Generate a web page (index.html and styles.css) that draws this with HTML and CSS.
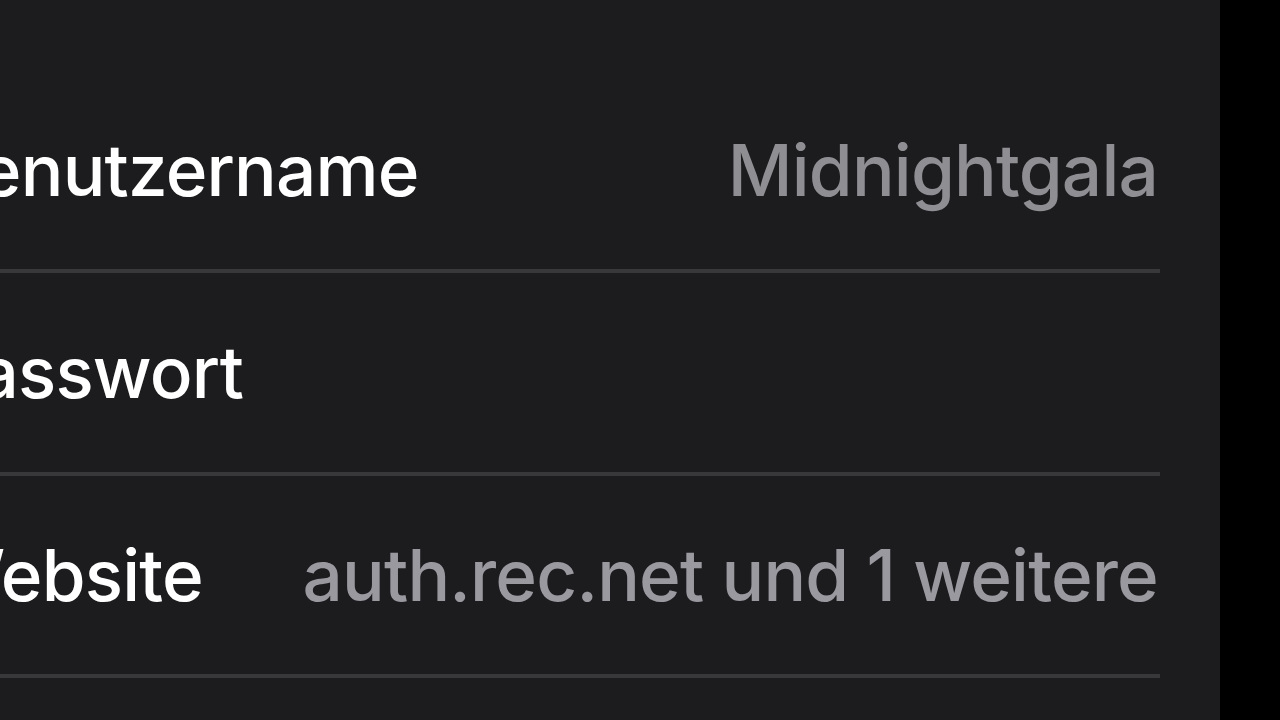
FILE: index.html
```html
<!DOCTYPE html>
<html lang="de">
<head>
<meta charset="utf-8">
<title>Passwort</title>
<link rel="stylesheet" href="styles.css">
</head>
<body>
<div class="screen">
  <div class="panel">
    <ul class="list">
      <li class="row"><span class="label">Benutzername</span><span class="value">Midnightgala</span></li>
      <li class="row"><span class="label">Passwort</span><span class="value"></span></li>
      <li class="row"><span class="label">Website</span><span class="value value-link">auth.rec.net und 1 weitere</span></li>
    </ul>
  </div>
  <div class="edge"></div>
</div>
</body>
</html>
```
FILE: styles.css
```css
html, body {
  margin: 0;
  padding: 0;
  background: #000;
}
.screen {
  display: flex;
  width: 1280px;
  height: 720px;
  overflow: hidden;
}
.panel {
  width: 1220px;
  background: #1c1c1e;
  overflow: hidden;
  padding-top: 70.5px;
  box-sizing: border-box;
}
.edge {
  flex: 1;
  background: #000;
}
.list {
  list-style: none;
  margin: 0 60px 0 -66px;
  padding: 0;
}
.row {
  display: flex;
  align-items: center;
  justify-content: space-between;
  box-sizing: border-box;
  height: 202.5px;
  border-bottom: 4px solid #38383a;
  font-family: Inter, "Noto Sans", sans-serif;
  font-size: 71px;
  letter-spacing: -0.8px;
}
.label {
  color: #ffffff;
  font-weight: 500;
  white-space: nowrap;
}
.value {
  color: #8e8e93;
  font-weight: 500;
  white-space: nowrap;
  margin-right: 2px;
}
.value-link {
  color: #9a99a0;
}
```
